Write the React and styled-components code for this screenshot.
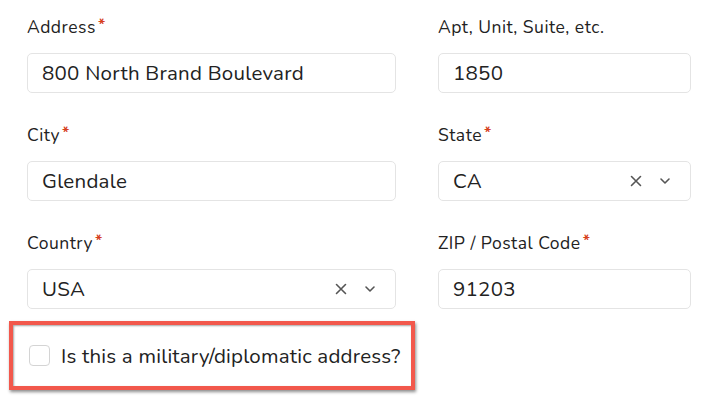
import styled, { createGlobalStyle } from "styled-components";

const GlobalStyle = createGlobalStyle`
  body {
    margin: 0;
    background: #ffffff;
    font-family: "Nunito", "Open Sans", "Noto Sans", sans-serif;
    color: #222222;
  }
`;

const fields = [
  { label: "Address", value: "800 North Brand Boulevard", required: true },
  { label: "Apt, Unit, Suite, etc.", value: "1850" },
  { label: "City", value: "Glendale", required: true },
  { label: "State", value: "CA", required: true, select: true },
  { label: "Country", value: "USA", required: true, select: true },
  { label: "ZIP / Postal Code", value: "91203", required: true },
];

export default function App() {
  return (
    <Page>
      <GlobalStyle />
      <Grid>
        {fields.map((f) => (
          <Field key={f.label}>
            <Label>
              {f.label}
              {f.required && <Star>*</Star>}
            </Label>
            <Input>
              <Value>{f.value}</Value>
              {f.select && (
                <Controls>
                  <svg width="12" height="12" viewBox="0 0 12 12">
                    <path
                      d="M1.5 1.5 L10.5 10.5 M10.5 1.5 L1.5 10.5"
                      stroke="#555"
                      strokeWidth="1.6"
                      strokeLinecap="round"
                    />
                  </svg>
                  <svg width="12" height="8" viewBox="0 0 12 8">
                    <path
                      d="M2 2 L6 6 L10 2"
                      stroke="#555"
                      strokeWidth="1.6"
                      fill="none"
                      strokeLinecap="round"
                      strokeLinejoin="round"
                    />
                  </svg>
                </Controls>
              )}
            </Input>
          </Field>
        ))}
      </Grid>
      <Highlight>
        <Box />
        <CheckText>Is this a military/diplomatic address?</CheckText>
      </Highlight>
    </Page>
  );
}

const Page = styled.div`
  width: 720px;
  height: 405px;
  padding: 16px 0 0 9px;
  box-sizing: border-box;
`;

const Grid = styled.div`
  display: grid;
  grid-template-columns: 369px 253px;
  column-gap: 42px;
  row-gap: 31px;
  padding-left: 18px;
`;

const Field = styled.div`
  display: flex;
  flex-direction: column;
  gap: 15px;
`;

const Label = styled.div`
  font-size: 17.5px;
  line-height: 22px;
  letter-spacing: 0.5px;
  color: #222;
  display: flex;
  align-items: flex-start;
`;

const Star = styled.span`
  color: #d6401c;
  font-size: 16px;
  font-weight: 700;
  line-height: 18px;
  margin-left: 2px;
`;

const Input = styled.div`
  height: 40px;
  box-sizing: border-box;
  border: 1px solid #e4e4e4;
  border-radius: 5px;
  display: flex;
  align-items: center;
  padding: 0 19px 0 14px;
`;

const Value = styled.span`
  flex: 1;
  font-size: 20.5px;
  letter-spacing: 0.25px;
  color: #222;
`;

const Controls = styled.div`
  display: flex;
  align-items: center;
  gap: 17px;
`;

const Highlight = styled.div`
  margin-top: 12px;
  width: 406px;
  height: 69px;
  box-sizing: border-box;
  border: 4px solid #f2584c;
  box-shadow: 1px 2px 3px rgba(0, 0, 0, 0.45), inset 1px 1px 2px rgba(0, 0, 0, 0.35);
  display: flex;
  align-items: center;
  gap: 11px;
  padding-left: 16px;
`;

const Box = styled.div`
  width: 21px;
  height: 21px;
  box-sizing: border-box;
  border: 1px solid #d4d4d4;
  border-radius: 4px;
  background: #fff;
`;

const CheckText = styled.span`
  font-size: 20.5px;
  letter-spacing: 0.2px;
  color: #222;
`;
